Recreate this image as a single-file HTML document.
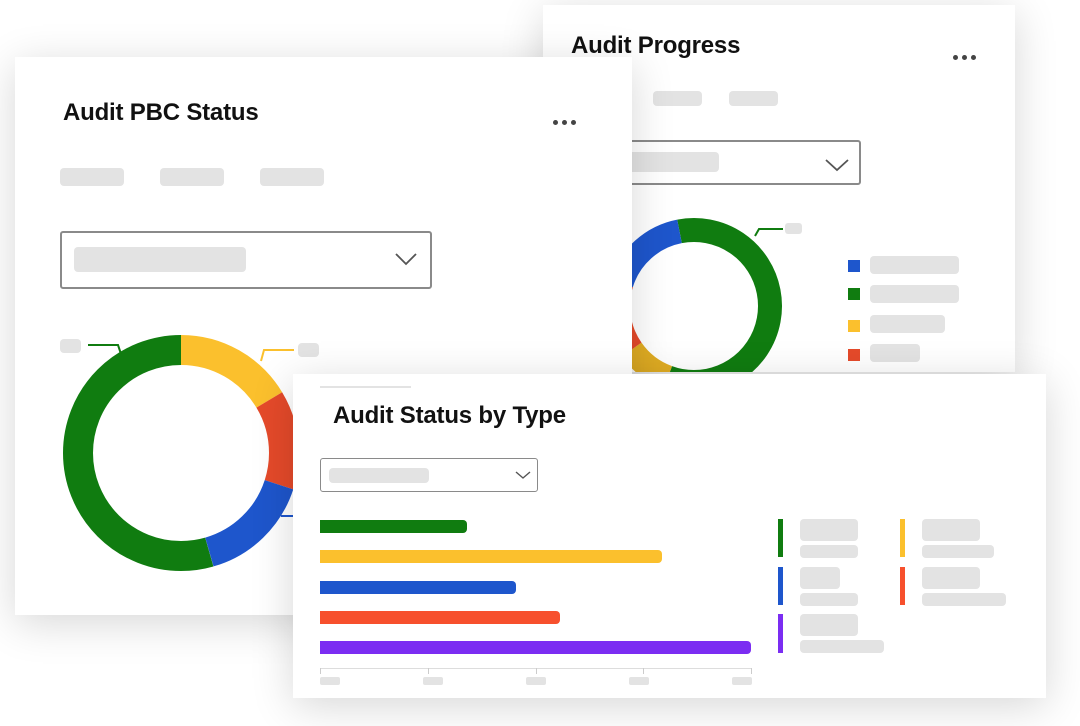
<!DOCTYPE html>
<html><head><meta charset="utf-8"><style>
*{margin:0;padding:0;box-sizing:border-box}
body{width:1080px;height:726px;background:#fff;position:relative;overflow:hidden;font-family:"Liberation Sans",sans-serif}
.card{position:absolute;background:#fff;box-shadow:0 8px 40px rgba(0,0,0,.16);overflow:hidden}
.a{position:absolute}
.p{position:absolute;background:#e3e3e3;border-radius:4px}
.t{position:absolute;font-size:24px;font-weight:bold;color:#111;letter-spacing:-0.2px;white-space:nowrap}
.dots{position:absolute;display:flex;gap:4px}
.dots i{width:5px;height:5px;border-radius:50%;background:#444;display:block}
.dd{position:absolute;border:2px solid #8a8a8a;border-radius:3px;background:#fff}
.bar{position:absolute;height:13px;left:320px;border-radius:0 4px 4px 0}
</style></head><body>

<!-- card 2 -->
<div class="card" style="left:543px;top:5px;width:472px;height:367px">
  <div class="t" style="left:28px;top:27px">Audit Progress</div>
  <div class="dots" style="left:410px;top:50px"><i></i><i></i><i></i></div>
  <div class="p" style="left:110px;top:86px;width:49px;height:15px"></div>
  <div class="p" style="left:186px;top:86px;width:49px;height:15px"></div>
  <div class="dd" style="left:40px;top:135px;width:278px;height:45px"></div>
  <div class="p" style="left:80px;top:147px;width:96px;height:20px"></div>
  <svg class="a" style="left:281px;top:152px" width="28" height="16"><path d="M2 3 L13 13 L24 3" fill="none" stroke="#555" stroke-width="1.8"/></svg>
  <svg class="a" style="left:0;top:0" width="472" height="367">
    <g transform="translate(151,301) rotate(-101)" fill="none" stroke-width="24">
      <circle r="76" stroke="#107c10" stroke-dasharray="279.9 477.5" stroke-dashoffset="0"/>
      <circle r="76" stroke="#e1ad23" stroke-dasharray="46.4 477.5" stroke-dashoffset="-279.9"/>
      <circle r="76" stroke="#e54a2a" stroke-dasharray="69 477.5" stroke-dashoffset="-326.3"/>
      <circle r="76" stroke="#1e56cc" stroke-dasharray="82.2 477.5" stroke-dashoffset="-395.3"/>
    </g>
    <path d="M212 231 L216 224 L240 224" fill="none" stroke="#107c10" stroke-width="2"/>
  </svg>
  <div class="p" style="left:242px;top:218px;width:17px;height:11px;border-radius:3px"></div>
  <div class="a" style="left:305px;top:255px;width:12px;height:12px;background:#1e56cc"></div>
  <div class="a" style="left:305px;top:283px;width:12px;height:12px;background:#107c10"></div>
  <div class="a" style="left:305px;top:315px;width:12px;height:12px;background:#fbc02d"></div>
  <div class="a" style="left:305px;top:344px;width:12px;height:12px;background:#e54a2a"></div>
  <div class="p" style="left:327px;top:251px;width:89px;height:18px"></div>
  <div class="p" style="left:327px;top:280px;width:89px;height:18px"></div>
  <div class="p" style="left:327px;top:310px;width:75px;height:18px"></div>
  <div class="p" style="left:327px;top:339px;width:50px;height:18px"></div>
</div>

<!-- card 1 -->
<div class="card" style="left:15px;top:57px;width:617px;height:558px">
  <div class="t" style="left:48px;top:42px">Audit PBC Status</div>
  <div class="dots" style="left:538px;top:63px"><i></i><i></i><i></i></div>
  <div class="p" style="left:45px;top:111px;width:64px;height:18px"></div>
  <div class="p" style="left:145px;top:111px;width:64px;height:18px"></div>
  <div class="p" style="left:245px;top:111px;width:64px;height:18px"></div>
  <div class="dd" style="left:45px;top:174px;width:372px;height:58px"></div>
  <div class="p" style="left:59px;top:190px;width:172px;height:25px"></div>
  <svg class="a" style="left:379px;top:194px" width="26" height="16"><path d="M2 3 L12 13 L22 3" fill="none" stroke="#555" stroke-width="1.8"/></svg>
  <svg class="a" style="left:0;top:0" width="617" height="558">
    <g transform="translate(166,396) rotate(-90)" fill="none" stroke-width="30">
      <circle r="103" stroke="#107c10" stroke-dasharray="352.4 647.2" stroke-dashoffset="-294.8"/>
      <circle r="103" stroke="#fbc02d" stroke-dasharray="106 647.2" stroke-dashoffset="0"/>
      <circle r="103" stroke="#e54a2a" stroke-dasharray="88 647.2" stroke-dashoffset="-106"/>
      <circle r="103" stroke="#1e56cc" stroke-dasharray="100.7 647.2" stroke-dashoffset="-194"/>
    </g>
    <path d="M73 288 L103 288 L106 297" fill="none" stroke="#107c10" stroke-width="2"/>
    <path d="M279 293 L249 293 L246 304" fill="none" stroke="#fbc02d" stroke-width="2"/>
    <path d="M266 459 L280 459" fill="none" stroke="#1e56cc" stroke-width="2"/>
  </svg>
  <div class="p" style="left:45px;top:282px;width:21px;height:14px"></div>
  <div class="p" style="left:283px;top:286px;width:21px;height:14px"></div>
</div>

<!-- card 3 -->
<div class="card" style="left:293px;top:374px;width:753px;height:324px;overflow:visible">
  <div class="a" style="left:27px;top:12px;width:91px;height:2px;background:#e3e3e3"></div>
  <div class="t" style="left:40px;top:28px">Audit Status by Type</div>
  <div class="dd" style="left:27px;top:84px;width:218px;height:34px;border-width:1.5px"></div>
  <div class="p" style="left:36px;top:94px;width:100px;height:15px"></div>
  <svg class="a" style="left:222px;top:96px" width="16" height="10"><path d="M1 2 L8 8 L15 2" fill="none" stroke="#555" stroke-width="1.4"/></svg>
</div>
<div class="bar" style="top:520px;width:147px;background:#107c10"></div>
<div class="bar" style="top:550px;width:342px;background:#fbc02d"></div>
<div class="bar" style="top:581px;width:196px;background:#1e56cc"></div>
<div class="bar" style="top:611px;width:240px;background:#f7502d"></div>
<div class="bar" style="top:641px;width:431px;background:#7b2df2"></div>
<div class="a" style="left:320px;top:668px;width:432px;height:1px;background:#ddd"></div>
<div class="a" style="left:320px;top:668px;width:1px;height:6px;background:#ccc"></div>
<div class="a" style="left:428px;top:668px;width:1px;height:6px;background:#ccc"></div>
<div class="a" style="left:536px;top:668px;width:1px;height:6px;background:#ccc"></div>
<div class="a" style="left:643px;top:668px;width:1px;height:6px;background:#ccc"></div>
<div class="a" style="left:751px;top:668px;width:1px;height:6px;background:#ccc"></div>
<div class="p" style="left:320px;top:677px;width:20px;height:8px;border-radius:2px"></div>
<div class="p" style="left:423px;top:677px;width:20px;height:8px;border-radius:2px"></div>
<div class="p" style="left:526px;top:677px;width:20px;height:8px;border-radius:2px"></div>
<div class="p" style="left:629px;top:677px;width:20px;height:8px;border-radius:2px"></div>
<div class="p" style="left:732px;top:677px;width:20px;height:8px;border-radius:2px"></div>

<div class="a" style="left:778px;top:519px;width:5px;height:38px;background:#107c10"></div>
<div class="a" style="left:778px;top:567px;width:5px;height:38px;background:#1e56cc"></div>
<div class="a" style="left:778px;top:614px;width:5px;height:39px;background:#7b2df2"></div>
<div class="a" style="left:900px;top:519px;width:5px;height:38px;background:#fbc02d"></div>
<div class="a" style="left:900px;top:567px;width:5px;height:38px;background:#f7502d"></div>
<div class="p" style="left:800px;top:519px;width:58px;height:22px"></div>
<div class="p" style="left:800px;top:545px;width:58px;height:13px"></div>
<div class="p" style="left:800px;top:567px;width:40px;height:22px"></div>
<div class="p" style="left:800px;top:593px;width:58px;height:13px"></div>
<div class="p" style="left:800px;top:614px;width:58px;height:22px"></div>
<div class="p" style="left:800px;top:640px;width:84px;height:13px"></div>
<div class="p" style="left:922px;top:519px;width:58px;height:22px"></div>
<div class="p" style="left:922px;top:545px;width:72px;height:13px"></div>
<div class="p" style="left:922px;top:567px;width:58px;height:22px"></div>
<div class="p" style="left:922px;top:593px;width:84px;height:13px"></div>
</body></html>
